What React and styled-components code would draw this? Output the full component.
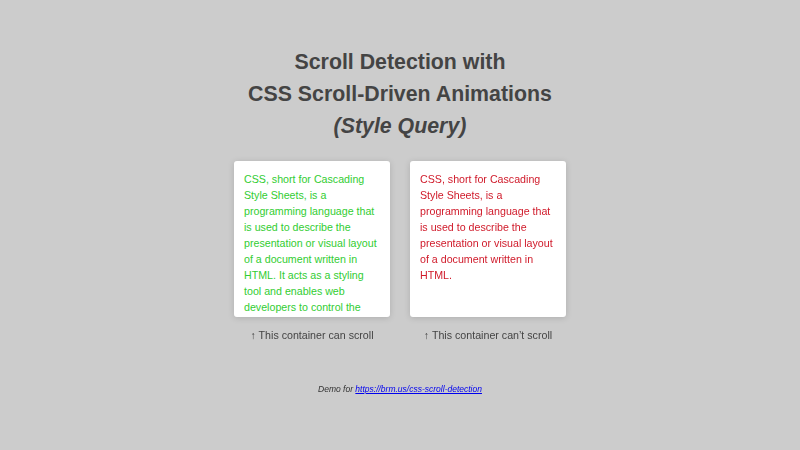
import React from 'react';
import styled, { createGlobalStyle } from 'styled-components';

const GlobalStyles = createGlobalStyle`
  html, body {
    margin: 0;
    padding: 0;
  }

  body {
    min-height: 100vh;
    background: #ccc;
    color: #444;
    font-family: "Liberation Sans", Arial, sans-serif;
    font-size: 10.67px;
    line-height: 16px;
  }
`;

const Page = styled.main`
  display: flex;
  flex-direction: column;
  align-items: center;
  padding-top: 46px;
`;

const Title = styled.h1`
  margin: 0 0 19px;
  font-size: 21.33px;
  line-height: 32px;
  font-weight: 700;
  text-align: center;
  color: #444;

  em {
    font-style: italic;
  }
`;

const Demos = styled.div`
  display: grid;
  grid-template-columns: repeat(2, 156px);
  gap: 20px;
`;

const Figure = styled.figure`
  margin: 0;
  display: flex;
  flex-direction: column;
  align-items: center;
`;

const Box = styled.div`
  box-sizing: border-box;
  width: 156px;
  height: 156px;
  padding: 10px;
  background: #fff;
  border-radius: 3px;
  box-shadow: 0 1px 6px rgba(0, 0, 0, 0.15);
  overflow-y: auto;
  scrollbar-width: none;
  color: ${(p) => (p.$scrolls ? '#32cd32' : '#d01a2a')};

  p {
    margin: 0;
  }
`;

const Caption = styled.figcaption`
  margin-top: 10px;
  text-align: center;
  color: #444;
`;

const Footer = styled.footer`
  margin-top: 40px;
  font-size: 8.5px;
  line-height: 12px;
  font-style: italic;
  color: #333;

  a {
    color: #00e;
  }
`;

const LONG_TEXT =
  'CSS, short for Cascading Style Sheets, is a programming language that is used to describe the presentation or visual layout of a document written in HTML. It acts as a styling tool and enables web developers to control the appearance of web pages, including the layout, colors, fonts, and other visual elements.';

const SHORT_TEXT =
  'CSS, short for Cascading Style Sheets, is a programming language that is used to describe the presentation or visual layout of a document written in HTML.';

export default function App() {
  return (
    <Page>
      <GlobalStyles />
      <Title>
        Scroll Detection with
        <br />
        CSS Scroll-Driven Animations
        <br />
        <em>(Style Query)</em>
      </Title>
      <Demos>
        <Figure>
          <Box $scrolls>
            <p>{LONG_TEXT}</p>
          </Box>
          <Caption>↑ This container can scroll</Caption>
        </Figure>
        <Figure>
          <Box>
            <p>{SHORT_TEXT}</p>
          </Box>
          <Caption>↑ This container can’t scroll</Caption>
        </Figure>
      </Demos>
      <Footer>
        Demo for <a href="https://brm.us/css-scroll-detection">https://brm.us/css-scroll-detection</a>
      </Footer>
    </Page>
  );
}
